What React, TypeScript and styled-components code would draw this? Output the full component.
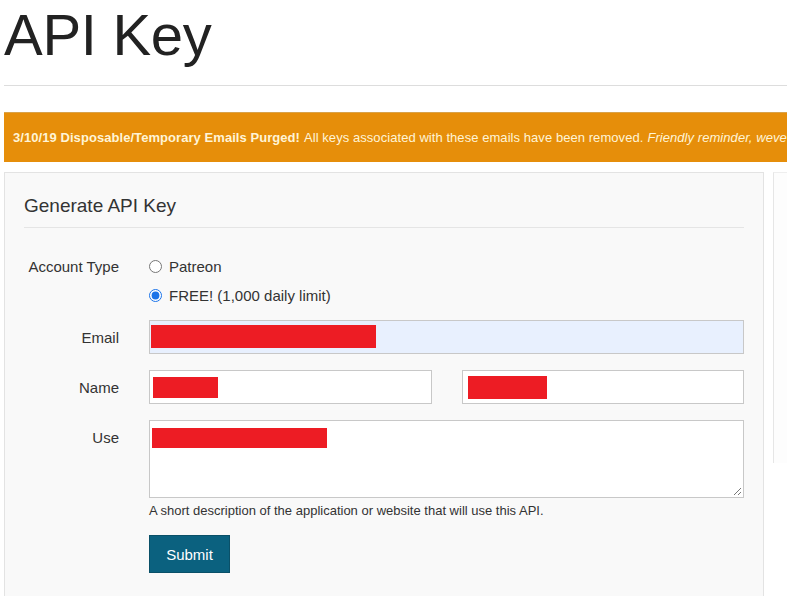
import styled, { createGlobalStyle } from "styled-components";

const GlobalStyle = createGlobalStyle`
  html, body {
    margin: 0;
    padding: 0;
    background: #ffffff;
    font-family: "Liberation Sans", Arial, sans-serif;
    color: #333333;
    overflow: hidden;
  }
`;

const Page = styled.div`
  width: 787px;
  height: 596px;
  padding-left: 4px;
  box-sizing: border-box;
  overflow: hidden;
`;

const Title = styled.h1`
  margin: 0;
  padding-top: 3px;
  font-size: 58px;
  font-weight: 400;
  line-height: 64px;
  color: #222222;
  letter-spacing: -0.3px;
`;

const Divider = styled.hr`
  margin: 18px 0 26px;
  border: 0;
  border-top: 1px solid #dddddd;
`;

const Alert = styled.div`
  height: 50px;
  display: flex;
  align-items: center;
  padding-left: 9px;
  background: #e68e0a;
  border-top: 1px solid #d9a24a;
  color: #fff4d6;
  font-size: 13px;
  letter-spacing: 0.06px;
  white-space: nowrap;
  overflow: hidden;
  box-sizing: border-box;

  strong {
    font-weight: 700;
    margin-right: 4px;
  }

  em {
    margin-left: 4px;
  }
`;

const Columns = styled.div`
  display: flex;
  gap: 9px;
  margin-top: 10px;
`;

const Card = styled.section`
  width: 760px;
  flex-shrink: 0;
  height: 440px;
  box-sizing: border-box;
  background: #f9f9f9;
  border: 1px solid #e3e3e3;
  padding: 18px 19px 0;
`;

const SideCard = styled.div`
  flex: 1;
  height: 290px;
  border-left: 1px solid #e6e6e6;
  border-top: 1px solid #eeeeee;
  background: #fdfdfd;
`;

const CardTitle = styled.h2`
  margin: 0;
  padding: 4px 0 10px;
  font-size: 19px;
  font-weight: 400;
  color: #333333;
  border-bottom: 1px solid #e5e5e5;
`;

const Form = styled.form`
  display: grid;
  grid-template-columns: 95px 1fr;
  column-gap: 30px;
  row-gap: 16px;
  padding-top: 30px;
`;

const Label = styled.label<{ $top?: number }>`
  text-align: right;
  font-size: 15px;
  color: #333333;
  padding-top: ${p => p.$top ?? 9}px;
  line-height: 17px;
`;

const Field = styled.div`
  display: flex;
  flex-direction: column;
`;

const RadioGroup = styled.div`
  display: flex;
  flex-direction: column;
  gap: 12px;
`;

const RadioOption = styled.label`
  display: flex;
  align-items: center;
  gap: 7px;
  font-size: 15px;
  line-height: 17px;
  color: #333333;

  input {
    margin: 0;
    width: 13px;
    height: 13px;
    accent-color: #1a73e8;
  }
`;

const InputBox = styled.div<{ $autofill?: boolean; $height?: number }>`
  position: relative;
  height: ${p => p.$height ?? 34}px;
  box-sizing: border-box;
  border: 1px solid #c8c8c8;
  background: ${p => (p.$autofill ? "#e8f0fe" : "#ffffff")};
`;

const Redaction = styled.span<{ $w: number; $h: number; $x: number; $y: number }>`
  position: absolute;
  left: ${p => p.$x}px;
  top: ${p => p.$y}px;
  width: ${p => p.$w}px;
  height: ${p => p.$h}px;
  background: #ed1c24;
`;

const ResizeGrip = styled.svg`
  position: absolute;
  right: 1px;
  bottom: 1px;
`;

const NameRow = styled.div`
  display: flex;
  gap: 30px;

  & > * {
    flex: 1;
  }
`;

const HelpText = styled.p`
  margin: 5px 0 0;
  font-size: 13px;
  line-height: 15px;
  color: #333333;
`;

const SubmitButton = styled.button`
  width: 81px;
  height: 38px;
  margin-top: 17px;
  border: 1px solid #0a5068;
  background: #0b617f;
  color: #ffffff;
  font-family: "Liberation Sans", Arial, sans-serif;
  font-size: 15px;
  cursor: pointer;
`;

export default function App() {
  return (
    <>
      <GlobalStyle />
      <Page>
        <Title>API Key</Title>
        <Divider />
        <Alert>
          <strong>3/10/19 Disposable/Temporary Emails Purged!</strong>
          All keys associated with these emails have been removed.
          <em>Friendly reminder, weve</em>
        </Alert>
        <Columns>
          <Card>
            <CardTitle>Generate API Key</CardTitle>
            <Form onSubmit={e => e.preventDefault()}>
              <Label $top={0}>Account Type</Label>
              <RadioGroup>
                <RadioOption>
                  <input type="radio" name="type" />
                  Patreon
                </RadioOption>
                <RadioOption>
                  <input type="radio" name="type" defaultChecked />
                  FREE! (1,000 daily limit)
                </RadioOption>
              </RadioGroup>

              <Label>Email</Label>
              <Field>
                <InputBox $autofill>
                  <Redaction $x={1} $y={4} $w={225} $h={23} />
                </InputBox>
              </Field>

              <Label>Name</Label>
              <NameRow>
                <InputBox>
                  <Redaction $x={3} $y={6} $w={65} $h={21} />
                </InputBox>
                <InputBox>
                  <Redaction $x={5} $y={5} $w={79} $h={23} />
                </InputBox>
              </NameRow>

              <Label>Use</Label>
              <Field>
                <InputBox $height={78}>
                  <Redaction $x={2} $y={7} $w={175} $h={20} />
                  <ResizeGrip width="9" height="9" viewBox="0 0 9 9">
                    <path d="M8 1 L1 8 M8 5 L5 8" stroke="#777" strokeWidth="1" fill="none" />
                  </ResizeGrip>
                </InputBox>
                <HelpText>A short description of the application or website that will use this API.</HelpText>
                <div>
                  <SubmitButton type="submit">Submit</SubmitButton>
                </div>
              </Field>
            </Form>
          </Card>
          <SideCard />
        </Columns>
      </Page>
    </>
  );
}
